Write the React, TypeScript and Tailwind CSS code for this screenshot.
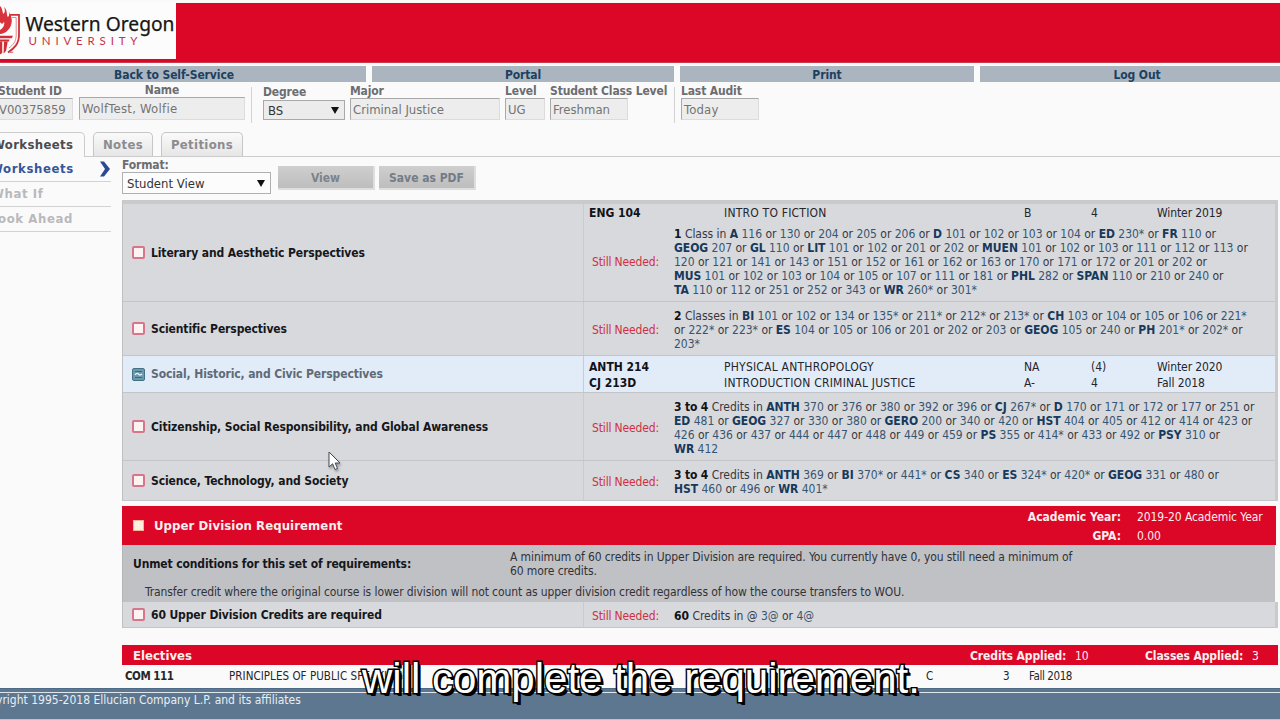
import type { ReactNode } from 'react'

type Course = {
  code: string
  title: string
  grade: string
  credits: string
  term: string
}

type Status = 'open' | 'partial'

type RequirementRowProps = {
  label: string
  status?: Status
  className: string
  bodyClassName?: string
  children: ReactNode
}

const NAV_ITEMS = [
  { label: 'Back to Self-Service', className: 'w-[366px] pr-[18px]' },
  { label: 'Portal', className: 'w-[302px]' },
  { label: 'Print', className: 'w-[294px]' },
  { label: 'Log Out', className: 'w-[300px] pl-[14px]' },
]

const LITERARY = [
  '#1# Class in *A* 116 or 130 or 204 or 205 or 206 or *D* 101 or 102 or 103 or 104 or *ED* 230* or *FR* 110 or',
  '*GEOG* 207 or *GL* 110 or *LIT* 101 or 102 or 201 or 202 or *MUEN* 101 or 102 or 103 or 111 or 112 or 113 or',
  '120 or 121 or 141 or 143 or 151 or 152 or 161 or 162 or 163 or 170 or 171 or 172 or 201 or 202 or',
  '*MUS* 101 or 102 or 103 or 104 or 105 or 107 or 111 or 181 or *PHL* 282 or *SPAN* 110 or 210 or 240 or',
  '*TA* 110 or 112 or 251 or 252 or 343 or *WR* 260* or 301*',
]

const SCIENTIFIC = [
  '#2# Classes in *BI* 101 or 102 or 134 or 135* or 211* or 212* or 213* or *CH* 103 or 104 or 105 or 106 or 221*',
  'or 222* or 223* or *ES* 104 or 105 or 106 or 201 or 202 or 203 or *GEOG* 105 or 240 or *PH* 201* or 202* or',
  '203*',
]

const CITIZENSHIP = [
  '#3# #to# #4# Credits in *ANTH* 370 or 376 or 380 or 392 or 396 or *CJ* 267* or *D* 170 or 171 or 172 or 177 or 251 or',
  '*ED* 481 or *GEOG* 327 or 330 or 380 or *GERO* 200 or 340 or 420 or *HST* 404 or 405 or 412 or 414 or 423 or',
  '426 or 436 or 437 or 444 or 447 or 448 or 449 or 459 or *PS* 355 or 414* or 433 or 492 or *PSY* 310 or',
  '*WR* 412',
]

const TECHNOLOGY = [
  '#3# #to# #4# Credits in *ANTH* 369 or *BI* 370* or 441* or *CS* 340 or *ES* 324* or 420* or *GEOG* 331 or 480 or',
  '*HST* 460 or 496 or *WR* 401*',
]

const UPPER_DIVISION = ['#60# Credits in @ 3@ or 4@']

// #x# is a bold count, *X* a bold subject code, a number is a course link
const Token = ({ word }: { word: string }) => {
  if (word.startsWith('#')) {
    return <b className="text-[#111318]">{word.slice(1, -1)}</b>
  }
  if (word.startsWith('*')) {
    return <b className="text-[#17395c]">{word.slice(1, -1)}</b>
  }
  if (/^\d/.test(word)) {
    return <span className="text-[#365571]">{word}</span>
  }
  return <>{word}</>
}

const Advice = ({ lines }: { lines: string[] }) => (
  <div className="flex items-center">
    <div className="w-[90px] shrink-0 pl-[8px] text-[#d0303f] tracking-[-0.15px]">Still Needed:</div>
    <div className="text-[#35383f] leading-[14px] tracking-[-0.03px] whitespace-nowrap">
      {lines.map((line) => (
        <div key={line} className="h-[14px]">
          {line.split(' ').map((word, i) => (
            <span key={i}>
              {i > 0 && ' '}
              <Token word={word} />
            </span>
          ))}
        </div>
      ))}
    </div>
  </div>
)

const CourseLine = ({ course }: { course: Course }) => (
  <div className="flex h-4 items-center pl-[5px] leading-4 text-[#24262c] whitespace-nowrap">
    <b className="w-[135px] text-[#111318]">{course.code}</b>
    <span className="w-[300px] tracking-[0.22px]">{course.title}</span>
    <span className="w-[67px]">{course.grade}</span>
    <span className="w-[66px]">{course.credits}</span>
    <span className="tracking-[-0.1px]">{course.term}</span>
  </div>
)

const StatusBox = ({ status }: { status: Status }) =>
  status === 'open' ? (
    <span className="size-[13px] shrink-0 rounded-[2px] border-2 border-[#d9758a] bg-[#fdf3f3]" />
  ) : (
    <span className="size-[13px] shrink-0 rounded-[2px] border border-[#447086] bg-[#6c99ab]">
      <svg viewBox="0 0 11 11" className="size-[11px]">
        <path d="M2 2.5h7M2 8.5h7" stroke="#3d697f" />
        <path d="M2 5.8C3.5 3.8 4.8 4.4 5.7 5.2S8 6.4 9 4.8" fill="none" stroke="#eaf5fa" strokeWidth="1.3" />
      </svg>
    </span>
  )

const RequirementRow = ({ label, status = 'open', className, bodyClassName = '', children }: RequirementRowProps) => (
  <div className={`flex border-b border-[#c3c5c9] ${className}`}>
    <div className="flex w-[461px] shrink-0 items-center gap-[6px] border-r border-[#c9cbd0] pl-[9px]">
      <StatusBox status={status} />
      <b className={`tracking-[-0.11px] ${status === 'open' ? 'text-[#15171b]' : 'text-[#5e6b76]'}`}>{label}</b>
    </div>
    <div className={`flex min-w-0 flex-1 flex-col justify-center ${bodyClassName}`}>{children}</div>
  </div>
)

const Field = ({ value, className }: { value: string; className: string }) => (
  <div
    className={`flex items-center border border-[#dcdcdc] border-t-[#a9a9a9] border-l-[#a9a9a9] bg-[#ededed] pt-px pl-[2px] text-[13px] leading-4 text-[#747474] whitespace-nowrap ${className}`}
  >
    {value}
  </div>
)

const FieldLabel = ({ children, className = '' }: { children: ReactNode; className?: string }) => (
  <div
    className={`h-[14px] text-[12px] leading-[15px] font-bold tracking-[-0.15px] text-[#6d6d70] whitespace-nowrap ${className}`}
  >
    {children}
  </div>
)

const Arrow = () => (
  <svg viewBox="0 0 8 7" className="h-[7px] w-[8px]">
    <path d="M0 0h8L4 7z" fill="#111" />
  </svg>
)

const Logo = () => (
  <svg viewBox="0 0 176 56" className="h-[56px] w-[176px] shrink-0 bg-[#fdfcfc]">
    <path d="M10 11.8H19V32C19 41 14 45.5 8 49.5" fill="none" stroke="#cf3138" strokeWidth="1.8" />
    <path d="M12 14.5H16.2V32C16.2 38.5 13 42 9 45" fill="none" stroke="#dd6d70" strokeWidth="0.8" />
    <path
      d="M0 3C3 6 2 9 3.5 11C5.5 9 5 6 4 4C8 7.5 6 12 8 14C9.6 12.5 9.4 10.5 8.8 9C12.2 14 12.4 18 11 22C9.6 26.5 6 30 1 31H0V27C3 25.5 5 22 4 18.5C3 21.5 1.2 21 0 19Z"
      fill="#d8323a"
    />
    <path d="M0 32.8H13L11.6 35.2H0Z" fill="#cf3038" />
    <path d="M0 36.5H9.4L9 38.6H0Z" fill="#cf3038" />
    <path d="M0 38.6H2.2V50L0 51.5ZM4 38.6H7.8L6 48L3.6 50.5Z" fill="#cf3038" />
    <path d="M9.8 49.3h3.4" stroke="#cf5a60" strokeWidth="1" />
    <text
      x="25.5"
      y="28"
      fontSize="20.5"
      fill="#161616"
      stroke="#161616"
      strokeWidth="0.25"
      fontFamily="'Noto Sans', sans-serif"
      textLength="149"
      lengthAdjust="spacingAndGlyphs"
    >
      Western Oregon
    </text>
    <text x="28.5" y="41.8" fontSize="11.5" fill="#c8304c" fontFamily="Lato, sans-serif" textLength="109">
      UNIVERSITY
    </text>
  </svg>
)

const Header = () => (
  <>
    <header className="mt-[3px] flex h-[60px] border-b border-[#c93a4c] bg-[#dc0627]">
      <Logo />
    </header>
    <nav className="mt-[3px] flex h-4 gap-[6px]">
      {NAV_ITEMS.map((item) => (
        <div
          key={item.label}
          className={`flex shrink-0 items-center justify-center bg-[#abb5c0] pt-px text-[12px] leading-4 font-bold tracking-[-0.1px] text-[#1d4161] ${item.className}`}
        >
          {item.label}
        </div>
      ))}
    </nav>
  </>
)

const StudentBar = () => (
  <div className="flex h-[50px] items-start">
    <div className="w-[73px] pt-[2px]">
      <FieldLabel className="-ml-[2px]">Student ID</FieldLabel>
      <Field value="V00375859" className="-ml-[4px] h-[22px] w-[77px] tracking-[-0.1px]" />
    </div>
    <div className="ml-[6px] w-[166px] pt-px">
      <FieldLabel className="text-center">Name</FieldLabel>
      <Field value="WolfTest, Wolfie" className="h-[23px] tracking-[0.25px]" />
    </div>
    <div className="mt-[5px] ml-[6px] h-[36px] w-px bg-[#d2d2d2]" />
    <div className="ml-[11px] w-[82px] pt-[3px]">
      <FieldLabel>Degree</FieldLabel>
      <div className="mt-px flex h-5 items-center justify-between border border-[#a9a9a9] bg-[#ececec] pt-px pr-[5px] pl-[4px] text-[13px] text-[#333]">
        BS
        <Arrow />
      </div>
    </div>
    <div className="ml-[5px] w-[150px] pt-[2px]">
      <FieldLabel>Major</FieldLabel>
      <Field value="Criminal Justice" className="h-[22px]" />
    </div>
    <div className="ml-[5px] w-[40px] pt-[2px]">
      <FieldLabel>Level</FieldLabel>
      <Field value="UG" className="h-[22px]" />
    </div>
    <div className="ml-[5px] w-[118px] pt-[2px]">
      <FieldLabel>Student Class Level</FieldLabel>
      <Field value="Freshman" className="h-[22px] w-[78px]" />
    </div>
    <div className="mt-[5px] ml-[6px] h-[36px] w-px bg-[#d2d2d2]" />
    <div className="ml-[6px] w-[78px] pt-[2px]">
      <FieldLabel>Last Audit</FieldLabel>
      <Field value="Today" className="h-[22px] tracking-[0.2px]" />
    </div>
  </div>
)

const Tabs = () => (
  <div className="flex h-[25px] border-b border-[#cccccc] text-[13px] font-bold tracking-[0.35px] text-[#8c8c8e]">
    <div className="flex h-[25px] w-[85px] items-center rounded-tr-[5px] border-t border-r border-[#cccccc] bg-[#fafafa] pb-px text-[#4c4c4e]">
      <span className="-ml-[8px]">Worksheets</span>
    </div>
    <div className="ml-[8px] flex w-[60px] items-center justify-center rounded-t-[5px] border border-b-0 border-[#c6c6c6] bg-linear-to-b from-[#fafafa] to-[#e6e6e6]">
      Notes
    </div>
    <div className="ml-[8px] flex w-[82px] items-center justify-center rounded-t-[5px] border border-b-0 border-[#c6c6c6] bg-linear-to-b from-[#fafafa] to-[#e6e6e6]">
      Petitions
    </div>
  </div>
)

const Sidebar = () => (
  <aside className="w-[111px] shrink-0 text-[13px] font-bold tracking-[0.6px] text-[#b9b9bc]">
    <div className="flex h-[25px] items-center justify-between border-b border-[#d2d2d2] text-[#35569a]">
      <span className="-ml-[10px]">Worksheets</span>
      <svg viewBox="0 0 12 16" className="h-4 w-3">
        <path d="M1 0.5H5L11 8L5 15.5H1L6 8Z" fill="#2b4a93" />
      </svg>
    </div>
    <div className="flex h-[25px] items-center border-b border-[#d2d2d2]">
      <span className="-ml-[9px]">What If</span>
    </div>
    <div className="flex h-[25px] items-center border-b border-[#d2d2d2]">
      <span className="-ml-[10px]">Look Ahead</span>
    </div>
  </aside>
)

const Toolbar = () => (
  <div className="flex h-[44px] items-start border-b border-[#c9c9c9]">
    <div className="w-[149px]">
      <FieldLabel className="mt-px">Format:</FieldLabel>
      <div className="flex h-[22px] items-center justify-between border border-[#b0b0b0] bg-[#fcfcfc] pt-px pr-[5px] pl-[4px] text-[13px] text-[#333]">
        Student View
        <Arrow />
      </div>
    </div>
    <div className="mt-[9px] ml-[7px] flex h-[24px] w-[97px] items-center justify-center border-r-2 border-b-2 border-[#dedede] bg-linear-to-b from-[#cfcfcf] to-[#bdbdbd] pt-px text-[12px] font-bold text-[#7c838c]">
      View
    </div>
    <div className="mt-[9px] ml-[4px] flex h-[24px] w-[97px] items-center justify-center border-r-2 border-b-2 border-[#dedede] bg-linear-to-b from-[#cfcfcf] to-[#bdbdbd] pt-px text-[12px] font-bold text-[#747c86]">
      Save as PDF
    </div>
  </div>
)

const GeneralBlock = () => (
  <section className="border-t-[3px] border-r-[3px] border-[#c9cacc] border-l border-l-[#bfc0c4] bg-[#d8d9dc]">
    <RequirementRow label="Literary and Aesthetic Perspectives" className="h-[98px]" bodyClassName="pb-[4px]">
      <CourseLine course={{ code: 'ENG 104', title: 'INTRO TO FICTION', grade: 'B', credits: '4', term: 'Winter 2019' }} />
      <div className="mt-[6px]">
        <Advice lines={LITERARY} />
      </div>
    </RequirementRow>
    <RequirementRow label="Scientific Perspectives" className="h-[54px]" bodyClassName="pt-[2px]">
      <Advice lines={SCIENTIFIC} />
    </RequirementRow>
    <RequirementRow
      label="Social, Historic, and Civic Perspectives"
      status="partial"
      className="h-[37px] bg-[#e2ecf8]"
      bodyClassName="pt-[2px]"
    >
      <CourseLine course={{ code: 'ANTH 214', title: 'PHYSICAL ANTHROPOLOGY', grade: 'NA', credits: '(4)', term: 'Winter 2020' }} />
      <CourseLine course={{ code: 'CJ 213D', title: 'INTRODUCTION CRIMINAL JUSTICE', grade: 'A-', credits: '4', term: 'Fall 2018' }} />
    </RequirementRow>
    <RequirementRow
      label="Citizenship, Social Responsibility, and Global Awareness"
      className="h-[68px]"
      bodyClassName="pt-[2px]"
    >
      <Advice lines={CITIZENSHIP} />
    </RequirementRow>
    <RequirementRow label="Science, Technology, and Society" className="h-[40px]" bodyClassName="pt-[2px]">
      <Advice lines={TECHNOLOGY} />
    </RequirementRow>
  </section>
)

const UpperDivisionBlock = () => (
  <section className="mt-[5px]">
    <div className="mr-[2px] flex h-[39px] items-center bg-[#dc0627] pl-[11px] text-[#fbeeee]">
      <span className="size-[11px] border border-[#f3b58f] bg-[#fdeee2]" />
      <b className="ml-[10px] flex-1 text-[13px] tracking-[0.09px]">Upper Division Requirement</b>
      <div className="w-[134px] pt-[2px] pr-[39px] text-right leading-[19px] font-bold whitespace-nowrap">
        <div className="-ml-10">Academic Year:</div>
        <div>GPA:</div>
      </div>
      <div className="-ml-[23px] w-[139px] pt-[2px] leading-[19px] tracking-[-0.08px] whitespace-nowrap">
        <div>2019-20 Academic Year</div>
        <div>0.00</div>
      </div>
    </div>
    <div className="mr-[3px] h-[57px] border-l border-[#b4b5b8] bg-[#c0c1c4] text-[#303238]">
      <div className="flex items-center pt-[5px] pl-[10px]">
        <b className="w-[377px] tracking-[-0.13px] text-[#15171b]">Unmet conditions for this set of requirements:</b>
        <div className="leading-[14px] tracking-[-0.105px] whitespace-nowrap">
          <div>A minimum of 60 credits in Upper Division are required. You currently have 0, you still need a minimum of</div>
          <div>60 more credits.</div>
        </div>
      </div>
      <div className="mt-[6px] pl-[22px] leading-4 tracking-[-0.1px] whitespace-nowrap">
        Transfer credit where the original course is lower division will not count as upper division credit regardless of how the
        course transfers to WOU.
      </div>
    </div>
    <div className="border-r-[3px] border-[#c9cacc] border-l border-l-[#bfc0c4] bg-[#d8d9dc]">
      <RequirementRow label="60 Upper Division Credits are required" className="h-[26px]" bodyClassName="pt-[2px]">
        <Advice lines={UPPER_DIVISION} />
      </RequirementRow>
    </div>
  </section>
)

const ElectivesBlock = () => (
  <section className="mt-[17px]">
    <div className="flex h-5 items-center bg-[#dc0627] pt-px pl-[11px] text-[#fbeeee] whitespace-nowrap">
      <b className="w-[837px] text-[13px]">Electives</b>
      <b className="w-[105px] tracking-[-0.1px]">Credits Applied:</b>
      <span className="w-[70px]">10</span>
      <b className="w-[107px] tracking-[-0.1px]">Classes Applied:</b>
      <span>3</span>
    </div>
    <div className="flex h-[23px] items-center pl-[3px] text-[11.5px] text-[#24262c] whitespace-nowrap">
      <b className="w-[104px] tracking-[-0.5px]">COM 111</b>
      <span className="w-[697px] tracking-[0.05px]">PRINCIPLES OF PUBLIC SPEAKING</span>
      <span className="w-[77px]">C</span>
      <span className="w-[26px]">3</span>
      <span className="tracking-[-0.4px]">Fall 2018</span>
    </div>
  </section>
)

const Caption = () => (
  <div className="absolute top-[655px] left-[362px] font-['Liberation_Sans',sans-serif] text-[42px] leading-[48px] text-white whitespace-nowrap [paint-order:stroke_fill] [-webkit-text-stroke:3px_#000] [text-shadow:1px_1px_0_#000,2px_2px_0_#000,3px_3px_0_#000]">
    will complete the requirement.
  </div>
)

const Cursor = () => (
  <svg viewBox="0 0 14 20" className="absolute top-[451px] left-[328px] h-5 w-3.5 drop-shadow-[1px_2px_1px_rgba(0,0,0,0.3)]">
    <path d="M1 1V16L4.6 12.8L7 18.5L9.5 17.4L7.2 12H12Z" fill="#fff" stroke="#444a55" />
  </svg>
)

export default function App() {
  return (
    <div className="relative flex h-[720px] w-[1280px] flex-col overflow-hidden bg-[#fafafa] font-['DejaVu_Sans_Condensed','DejaVu_Sans',sans-serif] text-[12px]">
      <Header />
      <StudentBar />
      <Tabs />
      <div className="flex h-[531px] shrink-0">
        <Sidebar />
        <main className="ml-[11px] w-[1156px] shrink-0">
          <Toolbar />
          <GeneralBlock />
          <UpperDivisionBlock />
          <ElectivesBlock />
        </main>
      </div>
      <footer className="h-[31px] shrink-0 border-t border-[#4d6a86] bg-[#5d7790] text-[12px] text-[#e8eef3]">
        <div className="mt-[3px] border-t border-[#dfe6ec] leading-[15px] whitespace-nowrap">
          <span className="-ml-[25px]">Copyright 1995-2018 Ellucian Company L.P. and its affiliates</span>
        </div>
      </footer>
      <div className="h-px shrink-0 bg-[#b9c4ce]" />
      <Cursor />
      <Caption />
    </div>
  )
}
